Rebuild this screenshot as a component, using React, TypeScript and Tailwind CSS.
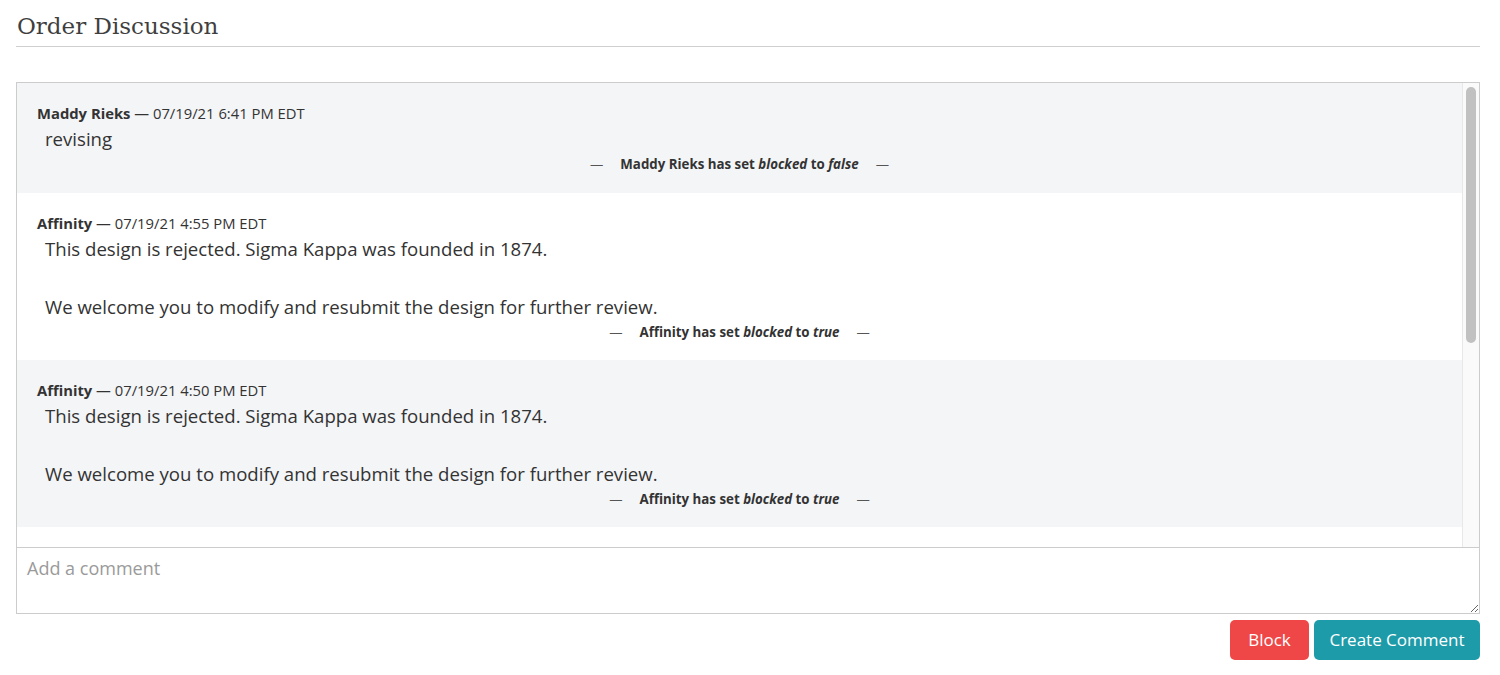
import { useState } from "react";

interface Comment {
  author: string;
  date: string;
  body: string;
  event?: { who: string; field: string; value: string };
}

const comments: Comment[] = [
  {
    author: "Maddy Rieks",
    date: "07/19/21 6:41 PM EDT",
    body: "revising",
    event: { who: "Maddy Rieks", field: "blocked", value: "false" },
  },
  {
    author: "Affinity",
    date: "07/19/21 4:55 PM EDT",
    body: "This design is rejected. Sigma Kappa was founded in 1874.\n\nWe welcome you to modify and resubmit the design for further review.",
    event: { who: "Affinity", field: "blocked", value: "true" },
  },
  {
    author: "Affinity",
    date: "07/19/21 4:50 PM EDT",
    body: "This design is rejected. Sigma Kappa was founded in 1874.\n\nWe welcome you to modify and resubmit the design for further review.",
    event: { who: "Affinity", field: "blocked", value: "true" },
  },
];

export default function App() {
  const [text, setText] = useState("");

  return (
    <div className="pl-4 pr-5 pt-[10px] font-['Open_Sans',sans-serif] text-[#333]">
      <h1 className="border-b border-[#cfcfcf] pb-[4px] pl-px font-['DejaVu_Serif',serif] text-[23px] leading-[32px] text-[#3f3f3f]">
        Order Discussion
      </h1>

      <div className="mt-[35px] border border-[#cccccc]">
        <div className="flex h-[464px]">
          <div className="min-w-0 flex-1 overflow-hidden">
            {comments.map((c, i) => (
              <div
                key={i}
                className={`px-5 pt-[20px] ${i === 0 ? "pb-[17px]" : "pb-[16px]"} ${i % 2 === 0 ? "bg-[#f4f5f7]" : "bg-white"}`}
              >
                <div className="text-[14.8px] leading-[21px]">
                  <span className="font-bold">{c.author}</span> — {c.date}
                </div>
                <div className="whitespace-pre-wrap pl-[8px] text-[18.6px] leading-[29px]">
                  {c.body}
                </div>
                {c.event && (
                  <div className="flex justify-center gap-[17px] text-[13.3px] leading-[23px]">
                    <span className="text-[#555]">—</span>
                    <span className="font-bold">
                      {c.event.who} has set <em>{c.event.field}</em> to{" "}
                      <em>{c.event.value}</em>
                    </span>
                    <span className="text-[#555]">—</span>
                  </div>
                )}
              </div>
            ))}
          </div>
          {/* scrollbar */}
          <div className="w-[17px] shrink-0 border-l border-[#e8e8e8] bg-[#fafafa]">
            <div className="ml-[3px] mt-[4px] h-[256px] w-[10px] rounded-full bg-[#c1c1c1]" />
          </div>
        </div>
        <textarea
          value={text}
          onChange={(e) => setText(e.target.value)}
          placeholder="Add a comment"
          className="block h-[66px] w-full border-t border-[#cccccc] px-[10px] py-[6px] text-[18px] leading-[29px] placeholder:text-[#9a9a9a] focus:outline-none"
        />
      </div>

      <div className="mt-[6px] flex justify-end gap-[5px]">
        <button className="h-[40px] w-[79px] cursor-pointer rounded-[5px] bg-[#ef4747] text-[17px] text-white">
          Block
        </button>
        <button className="h-[40px] w-[166px] cursor-pointer rounded-[5px] bg-[#1e9ba8] text-[17px] text-white">
          Create Comment
        </button>
      </div>
    </div>
  );
}
